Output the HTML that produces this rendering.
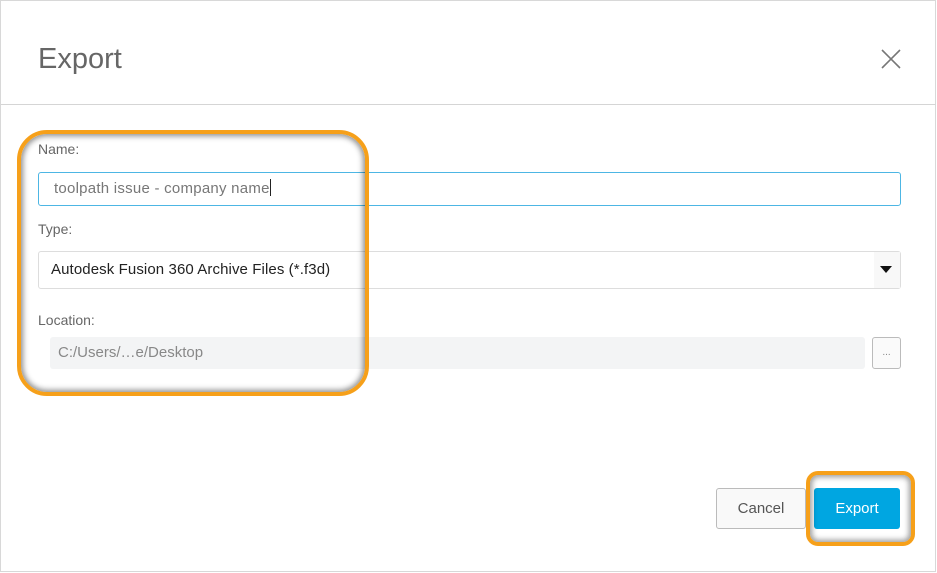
<!DOCTYPE html>
<html><head><style>
*{margin:0;padding:0;box-sizing:border-box}
body{width:937px;height:573px;background:#fff;position:relative;overflow:hidden;font-family:"Liberation Sans",Arial,sans-serif}
.a{position:absolute}
.lbl{font-size:14px;color:#666}
</style></head><body>
<div class="a" style="left:0;top:0;width:936px;height:572px;border:1px solid #d8d8d8"></div>
<div class="a" style="left:38px;top:43px;font-size:29px;color:#666">Export</div>
<svg class="a" style="left:881px;top:49px" width="20" height="20"><path d="M1 1L19 19M19 1L1 19" stroke="#777" stroke-width="1.6"/></svg>
<div class="a" style="left:1px;top:104px;width:935px;height:1px;background:#d5d5d5"></div>

<div class="a lbl" style="left:38px;top:141px">Name:</div>
<div class="a" style="left:38px;top:172px;width:863px;height:34px;border:1px solid #4db6e4;border-radius:3px"></div>
<div class="a" style="left:54px;top:179px;font-size:15px;color:#777;letter-spacing:0.25px">toolpath issue - company name<span style="display:inline-block;width:1px;height:17px;background:#222;vertical-align:-3px"></span></div>

<div class="a lbl" style="left:38px;top:221px">Type:</div>
<div class="a" style="left:38px;top:251px;width:863px;height:38px;border:1px solid #ddd;border-radius:3px;background:#fff"></div>
<div class="a" style="left:874px;top:252px;width:26px;height:36px;background:#f8f8f8"></div>
<svg class="a" style="left:880px;top:266px" width="12" height="8"><path d="M0 0H12L6 7Z" fill="#111"/></svg>
<div class="a" style="left:51px;top:261px;font-size:15px;color:#222;letter-spacing:0.1px">Autodesk Fusion 360 Archive Files (*.f3d)</div>

<div class="a lbl" style="left:38px;top:312px">Location:</div>
<div class="a" style="left:50px;top:337px;width:815px;height:32px;background:#f3f4f5;border-radius:3px"></div>
<div class="a" style="left:58px;top:344px;font-size:15px;color:#888">C:/Users/…e/Desktop</div>
<div class="a" style="left:872px;top:337px;width:29px;height:32px;border:1px solid #bbb;border-radius:3px;background:#fafafa;font-size:10px;color:#888;text-align:center;line-height:30px">...</div>

<div class="a" style="left:17px;top:130px;width:352px;height:266px;border:4px solid #f6a01a;border-radius:30px;box-shadow:inset 0 0 6px 2px rgba(0,0,0,.45)"></div>

<div class="a" style="left:716px;top:488px;width:90px;height:41px;border:1px solid #bbb;border-radius:3px;background:#f9f9f9;font-size:15px;color:#555;text-align:center;line-height:39px">Cancel</div>
<div class="a" style="left:814px;top:488px;width:86px;height:41px;border-radius:3px;background:#00a6e1;font-size:15px;color:#fff;text-align:center;line-height:41px">Export</div>
<div class="a" style="left:806px;top:471px;width:109px;height:75px;border:4px solid #f6a01a;border-radius:12px;box-shadow:inset 0 0 6px 2px rgba(0,0,0,.4)"></div>
</body></html>
